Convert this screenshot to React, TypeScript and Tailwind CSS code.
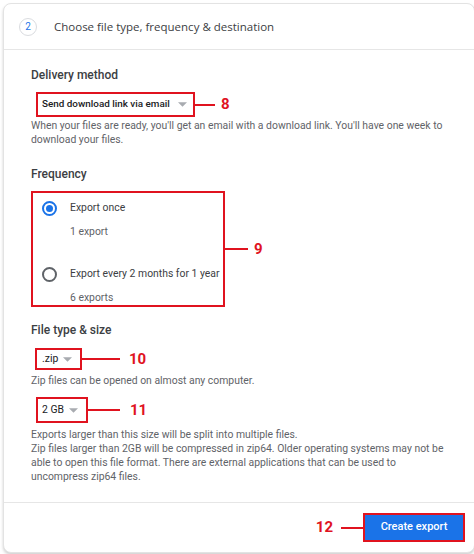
import React from 'react';

const RED = 'border-[#e0131f]';

function Callout({ n, len }: { n: string; len: string }) {
  return (
    <div className="flex items-center">
      <div className={`h-[2px] bg-[#e0131f] ${len}`} />
      <span className="ml-[6px] text-[15px] font-bold text-[#e0131f] leading-none">{n}</span>
    </div>
  );
}

function Caret() {
  return (
    <svg width="9" height="5" viewBox="0 0 10 5" className="shrink-0">
      <path d="M0 0 L10 0 L5 5 Z" fill="#a8abb0" />
    </svg>
  );
}

function Radio({ checked }: { checked: boolean }) {
  return (
    <span
      className={`flex h-[15px] w-[15px] shrink-0 items-center justify-center rounded-full border-2 ${
        checked ? 'border-[#1a73e8]' : 'border-[#5f6368]'
      }`}
    >
      {checked && <span className="h-[7px] w-[7px] rounded-full bg-[#1a73e8]" />}
    </span>
  );
}

export default function App() {
  return (
    <div className="min-h-[554px] bg-white pl-[3px] pr-[2px] pt-[3px]" style={{ fontFamily: 'Roboto, "Liberation Sans", sans-serif' }}>
      <div className="w-[472px] rounded-lg border border-[#e3e3e3] bg-white shadow-[0_2px_3px_rgba(0,0,0,0.18)]">
        <div className="flex h-[46px] items-center border-b border-[#e6e6e6] pl-[15px]">
          <span className="flex h-[18px] w-[18px] items-center justify-center rounded-full border border-[#dadce0] text-[10px] text-[#1a73e8]">
            2
          </span>
          <span className="ml-[17px] text-[11.5px] text-[#3c4043]" style={{ fontFamily: '"Open Sans", Roboto, sans-serif' }}>
            Choose file type, frequency &amp; destination
          </span>
        </div>

        <div className="border-b border-[#e6e6e6] pb-[18px] pl-[27px] pr-[26px] pt-[17px]">
          <div className="text-[12px] leading-[16px] font-medium text-[#3c4043]">Delivery method</div>
          <div className="mt-[9px] flex items-center">
            <div className={`ml-[5px] flex h-[25px] w-[159px] items-center justify-between border-2 ${RED} pl-[4px] pr-[6px]`}>
              <span className="whitespace-nowrap text-[9.9px] font-medium text-[#202124]">Send download link via email</span>
              <Caret />
            </div>
            <Callout n="8" len="w-[20px]" />
          </div>
          <p className="mt-[2px] text-[10.4px] leading-[14px] text-[#5f6368]">
            When your files are ready, you'll get an email with a download link. You'll have one week to download your files.
          </p>

          <div className="mt-[19px] text-[12px] leading-[16px] font-medium text-[#3c4043]">Frequency</div>
          <div className="mt-[9px] flex items-center">
            <div className={`h-[116px] w-[194px] border-2 ${RED} pl-[9px] pt-[7px]`}>
              <div className="flex h-[16px] items-center">
                <Radio checked />
                <span className="ml-[13px] text-[10.4px] text-[#3c4043]">Export once</span>
              </div>
              <div className="ml-[28px] mt-[8px] text-[10.4px] leading-[16px] text-[#5f6368]">1 export</div>
              <div className="mt-[26px] flex h-[16px] items-center">
                <Radio checked={false} />
                <span className="ml-[13px] whitespace-nowrap text-[10.4px] text-[#3c4043]">Export every 2 months for 1 year</span>
              </div>
              <div className="ml-[28px] mt-[8px] text-[10.4px] leading-[16px] text-[#5f6368]">6 exports</div>
            </div>
            <Callout n="9" len="w-[23px]" />
          </div>

          <div className="mt-[15px] text-[12px] leading-[16px] font-medium text-[#3c4043]">File type &amp; size</div>
          <div className="mt-[10px] flex items-center">
            <div className={`ml-[4px] flex h-[22px] w-[47px] items-center justify-between border-2 ${RED} pl-[5px] pr-[8px]`}>
              <span className="text-[10.4px] text-[#202124]">.zip</span>
              <Caret />
            </div>
            <div className="flex items-center">
              <div className="h-[2px] w-[38px] bg-[#e0131f]" />
              <span className="ml-[9px] text-[15px] font-bold leading-none text-[#e0131f]">10</span>
            </div>
          </div>
          <p className="mt-[4px] text-[10.4px] leading-[14px] text-[#5f6368]">Zip files can be opened on almost any computer.</p>
          <div className="mt-[9px] flex items-center">
            <div className={`ml-[5px] flex h-[26px] w-[52px] items-center justify-between border-2 ${RED} pl-[4px] pr-[8px]`}>
              <span className="text-[10.4px] text-[#202124]">2 GB</span>
              <Caret />
            </div>
            <div className="flex items-center">
              <div className="h-[2px] w-[32px] bg-[#e0131f]" />
              <span className="ml-[10px] text-[15px] font-bold leading-none text-[#e0131f]">11</span>
            </div>
          </div>
          <p className="mt-[5px] text-[10.4px] leading-[14px] text-[#5f6368]">
            Exports larger than this size will be split into multiple files.
            <br />
            Zip files larger than 2GB will be compressed in zip64. Older operating systems may not be able to open this file format. There are external applications that can be used to uncompress zip64 files.
          </p>
        </div>

        <div className="flex items-center justify-end pb-[10px] pr-[9px] pt-[10px]">
          <span className="text-[15px] font-bold leading-none text-[#e0131f]">12</span>
          <div className="ml-[8px] h-[2px] w-[22px] bg-[#e0131f]" />
          <button className={`h-[29px] w-[102px] border-2 ${RED} bg-[#1a73e8] text-[11px] font-medium text-white`}>
            Create export
          </button>
        </div>
      </div>
    </div>
  );
}
